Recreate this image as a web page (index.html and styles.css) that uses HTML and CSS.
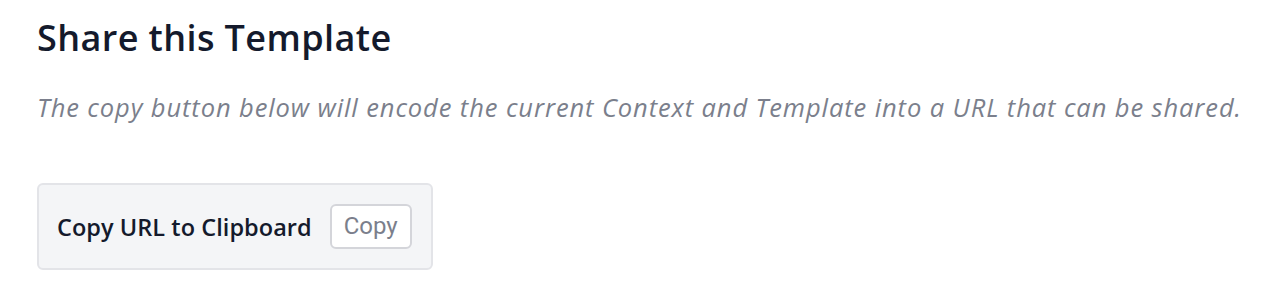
FILE: index.html
```html
<!DOCTYPE html>
<html>
<head>
<meta charset="utf-8">
<link rel="stylesheet" href="styles.css">
</head>
<body>
<main class="page">
  <h2 class="title">Share this Template</h2>
  <p class="desc">The copy button below will encode the current Context and Template into a URL that can be shared.</p>
  <div class="share-box">
    <span class="share-label">Copy URL to Clipboard</span>
    <button class="copy-btn" type="button">Copy</button>
  </div>
</main>
</body>
</html>
```
FILE: styles.css
```css
html, body {
  margin: 0;
  padding: 0;
  background: #ffffff;
}
.page {
  padding: 16px 37px;
  font-family: "Open Sans", "Noto Sans", sans-serif;
}
.title {
  margin: 0;
  font-size: 36px;
  line-height: 44px;
  font-weight: 600;
  letter-spacing: 0.4px;
  color: #141a2c;
}
.desc {
  margin: 29px 0 0;
  font-size: 25.5px;
  line-height: 36px;
  font-style: italic;
  letter-spacing: 0.9px;
  color: #7b7f8c;
  white-space: nowrap;
}
.share-box {
  display: inline-flex;
  align-items: center;
  gap: 18px;
  margin-top: 58px;
  padding: 19px 19px 19px 18px;
  background: #f4f5f7;
  border: 2px solid #e3e4e8;
  border-radius: 6px;
}
.share-label {
  font-size: 23.5px;
  font-weight: 600;
  letter-spacing: 0.05px;
  color: #141a2c;
}
.copy-btn {
  font-family: Roboto, "Liberation Sans", sans-serif;
  font-size: 24px;
  color: #7b7f8c;
  background: #ffffff;
  border: 2px solid #d4d5da;
  border-radius: 6px;
  padding: 7px 12px;
  line-height: 27px;
}
```
